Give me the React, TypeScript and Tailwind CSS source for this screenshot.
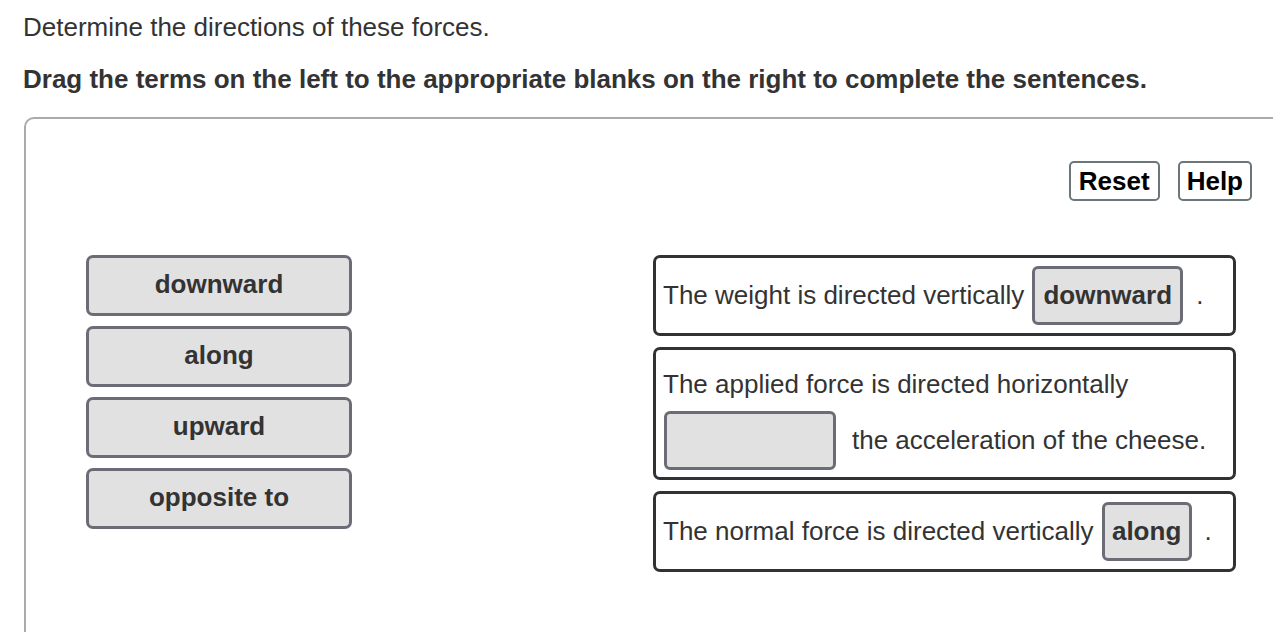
import React from 'react';

const font = { fontFamily: '"Liberation Sans", Arial, Helvetica, sans-serif' };

function Term({ label }: { label: string }) {
  return (
    <div className="h-[61px] rounded-[7px] border-[3px] border-[#6c6c76] bg-[#e1e1e1] flex items-center justify-center pb-[2px] text-[26px] font-bold text-[#333]">
      {label}
    </div>
  );
}

function Drop({ label, w }: { label?: string; w: string }) {
  return (
    <div
      className={`${w} h-[59px] shrink-0 rounded-[6px] border-[3px] border-[#6c6c76] bg-[#e1e1e1] flex items-center justify-center text-[26px] font-bold text-[#333]`}
    >
      {label}
    </div>
  );
}

export default function App() {
  return (
    <div style={font} className="w-[1273px] h-[632px] overflow-hidden bg-white text-[#333]">
      <p className="pl-[23px] pt-[12px] text-[26px] leading-[30px]">Determine the directions of these forces.</p>
      <p className="pl-[23px] pt-[22px] text-[26px] leading-[30px] font-bold">
        Drag the terms on the left to the appropriate blanks on the right to complete the sentences.
      </p>

      <div className="ml-[24px] mt-[23px] w-[1300px] h-[600px] border-2 border-[#aaa] rounded-tl-[10px]">
        {/* Reset / Help */}
        <div className="w-[1226px] flex justify-end gap-[18px] pt-[42px]">
          <button className="h-[40px] px-[8px] rounded-[5px] border-2 border-[#6b767a] bg-white text-[26px] font-bold text-black leading-none">
            Reset
          </button>
          <button className="h-[40px] px-[7px] rounded-[5px] border-2 border-[#6b767a] bg-white text-[26px] font-bold text-black leading-none">
            Help
          </button>
        </div>

        <div className="flex mt-[54px]">
          {/* Terms */}
          <div className="ml-[60px] w-[266px] flex flex-col gap-[10px]">
            <Term label="downward" />
            <Term label="along" />
            <Term label="upward" />
            <Term label="opposite to" />
          </div>

          {/* Sentences */}
          <div className="ml-[301px] w-[583px] flex flex-col gap-[11px] text-[26px]">
            <div className="h-[81px] rounded-[7px] border-[3px] border-[#2f3335] flex items-center pl-[7px]">
              <span>The weight is directed vertically</span>
              <div className="ml-[8px]">
                <Drop label="downward" w="w-[151px]" />
              </div>
              <span className="ml-[13px]">.</span>
            </div>

            <div className="h-[133px] rounded-[7px] border-[3px] border-[#2f3335] flex flex-col pl-[8px] pt-[12px]">
              <div className="h-[44px] flex items-center">
                <span className="-ml-[1px]">The applied force is directed horizontally</span>
              </div>
              <div className="mt-[5px] flex items-center">
                <Drop w="w-[172px]" />
                <span className="ml-[16px]">the acceleration of the cheese.</span>
              </div>
            </div>

            <div className="h-[81px] rounded-[7px] border-[3px] border-[#2f3335] flex items-center pl-[7px]">
              <span>The normal force is directed vertically</span>
              <div className="ml-[8px]">
                <Drop label="along" w="w-[90px]" />
              </div>
              <span className="ml-[13px]">.</span>
            </div>
          </div>
        </div>
      </div>
    </div>
  );
}
